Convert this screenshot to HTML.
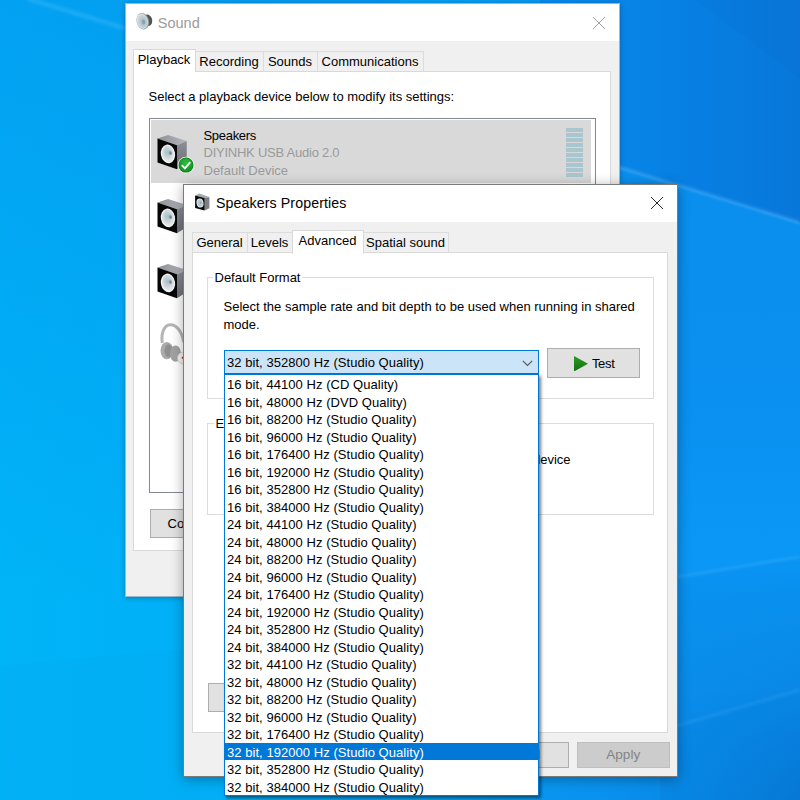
<!DOCTYPE html>
<html lang="en">
<head>
<meta charset="utf-8">
<title>Sound</title>
<style>
*{box-sizing:border-box;margin:0;padding:0}
html,body{width:800px;height:800px;overflow:hidden;background:#0a9af0}
body{position:relative;font-family:"Liberation Sans",sans-serif;font-size:13px;color:#000;-webkit-font-smoothing:antialiased}
.abs{position:absolute}
.t{position:absolute;white-space:nowrap;line-height:16px}
#wall{position:absolute;left:0;top:0;width:800px;height:800px}
/* ---------- Sound window ---------- */
#snd{position:absolute;left:124.5px;top:3px;width:495px;height:594px;background:#f0f0f0;border:1px solid #9db6c8;box-shadow:0 1px 5px rgba(0,0,0,.28)}
#snd .tb{position:absolute;left:0;top:0;width:493px;height:37px;background:#fff}
#snd .title{left:32.3px;top:9px;font-size:14.5px;line-height:20px;color:#9b9b9b}
.tab{position:absolute;top:47px;height:20px;background:#f0f0f0;border:1px solid #dcdcdc;border-bottom:none;font-size:13px;line-height:19px;text-align:center;white-space:nowrap}
.tab.sel{top:45px;height:23px;background:#fff;border-color:#d9d9d9;z-index:2;line-height:20px}
.panel{position:absolute;background:#fff;border:1px solid #d9d9d9}
.btn{position:absolute;background:#e1e1e1;border:1px solid #adadad;text-align:center;white-space:nowrap}
.btn.dis{background:#cccccc;border-color:#bfbfbf;color:#838383}
/* ---------- Properties window ---------- */
#prop{position:absolute;left:182.5px;top:184px;width:495px;height:593px;background:#f0f0f0;border:1px solid #7a7a7a;box-shadow:0 2px 12px rgba(0,0,0,.33)}
#prop .in{position:absolute;left:0;top:1px;width:493px;height:589px}
#prop .tb{position:absolute;left:0;top:0;width:493px;height:37px;background:#fff}
#prop .title{left:32.5px;top:7px;font-size:14.2px;line-height:20px;color:#000;letter-spacing:.1px}
.grp{position:absolute;border:1px solid #dcdcdc}
.grp .lg{position:absolute;left:6px;top:-8.5px;background:#fff;padding:0 2px;line-height:16px;white-space:nowrap}
/* dropdown */
#dd{position:absolute;left:224px;top:374px;width:315px;height:422px;background:#fff;border:1px solid #0078d7;box-shadow:2px 2px 3px rgba(0,0,0,.5);z-index:10}
#dd div{height:17.5px;line-height:19.5px;padding-left:2px;white-space:nowrap;font-size:13px;color:#000;letter-spacing:.05px}
#dd div.hl{background:#0078d7;color:#fff}
</style>
</head>
<body>
<svg id="wall" viewBox="0 0 800 800" preserveAspectRatio="none">
  <defs>
    <linearGradient id="gA" x1="0" y1="0" x2="1" y2="0">
      <stop offset="0" stop-color="#00b4f8"/>
      <stop offset="0.23" stop-color="#01b0f7"/>
      <stop offset="0.75" stop-color="#0992ee"/>
      <stop offset="0.875" stop-color="#0888e4"/>
      <stop offset="1" stop-color="#077ad6"/>
    </linearGradient>
    <linearGradient id="gB" x1="0" y1="0" x2="0" y2="1">
      <stop offset="0" stop-color="#0a6ee0" stop-opacity=".27"/>
      <stop offset="0.4" stop-color="#0a6ee0" stop-opacity=".13"/>
      <stop offset="0.75" stop-color="#0a6ee0" stop-opacity="0"/>
    </linearGradient>
    <linearGradient id="gC" x1="0" y1="0" x2="0" y2="1">
      <stop offset="0" stop-color="#0a8eee"/>
      <stop offset="0.5" stop-color="#0a90f0"/>
      <stop offset="0.7" stop-color="#0a98f6"/>
      <stop offset="0.86" stop-color="#0a92f0" stop-opacity=".7"/>
      <stop offset="1" stop-color="#0a8cec" stop-opacity="0"/>
    </linearGradient>
    <linearGradient id="gD" x1="0" y1="0" x2="1" y2="0">
      <stop offset="0" stop-color="#088aec"/>
      <stop offset="0.4" stop-color="#0783e6"/>
      <stop offset="1" stop-color="#0877da"/>
    </linearGradient>
    <filter id="bl" x="-20%" y="-20%" width="140%" height="140%"><feGaussianBlur stdDeviation="1.6"/></filter>
  </defs>
  <rect x="0" y="0" width="800" height="800" fill="url(#gA)"/>
  <rect x="0" y="0" width="400" height="800" fill="url(#gB)"/>
  <rect x="560" y="0" width="240" height="800" fill="url(#gC)"/>
  <path d="M540 0 L800 0 L800 222.5 L620 167.5 L540 143 Z" fill="url(#gD)"/>
  <path d="M696 0 L800 0 L800 78 Z" fill="#0560c0" fill-opacity=".10"/>
  <path d="M540 143 L620 167.5 L800 222.5" stroke="#7cc8ff" stroke-opacity=".5" stroke-width="2" fill="none" filter="url(#bl)"/>
  <path d="M660 580 L800 558 L800 800 L660 800 Z" fill="#0678d8" fill-opacity=".10"/>
  <path d="M660 732 L800 690 L800 800 L660 800 Z" fill="#0670d0" fill-opacity=".07"/>
  <path d="M660 580 L800 557" stroke="#6cc4ff" stroke-opacity=".3" stroke-width="2" fill="none" filter="url(#bl)"/>
  <path d="M660 731 L800 690" stroke="#6cc4ff" stroke-opacity=".22" stroke-width="2" fill="none" filter="url(#bl)"/>
  <path d="M28 -1 L126 28.5" stroke="#5ccaff" stroke-opacity=".28" stroke-width="4" fill="none" filter="url(#bl)"/>
  <polygon points="0,666 200,648 200,800 0,800" fill="#0aa0f0" fill-opacity=".10"/>
</svg>

<!-- ================= Sound window ================= -->
<div id="snd">
  <div class="tb"></div>
  <svg class="abs" style="left:8px;top:7px" width="20" height="20" viewBox="0 0 20 20">
    <defs><radialGradient id="sc" cx=".55" cy=".55" r=".6"><stop offset="0" stop-color="#9fb6c0"/><stop offset=".6" stop-color="#c3d0d5"/><stop offset="1" stop-color="#e6ecee"/></radialGradient></defs>
    <ellipse cx="13.6" cy="9.3" rx="4.6" ry="5.8" fill="#555" transform="rotate(-15 13.6 9.3)"/>
    <ellipse cx="8.8" cy="10.2" rx="6.2" ry="8.4" fill="#8f9a9e" transform="rotate(-14 8.8 10.2)"/>
    <ellipse cx="8.4" cy="10.2" rx="5.6" ry="7.8" fill="url(#sc)" transform="rotate(-14 8.4 10.2)"/>
    <ellipse cx="9.6" cy="11" rx="1.6" ry="2.4" fill="#8aa3ad" transform="rotate(-14 9.6 11)"/>
  </svg>
  <div class="t title">Sound</div>
  <svg class="abs" style="left:466px;top:12px" width="14" height="14" viewBox="0 0 14 14"><path d="M1 1 L13 13 M13 1 L1 13" stroke="#a0a0a0" stroke-width="1" fill="none"/></svg>

  <div class="tab sel" style="left:7px;width:63px">Playback</div>
  <div class="tab" style="left:69px;width:69px">Recording</div>
  <div class="tab" style="left:137px;width:55px">Sounds</div>
  <div class="tab" style="left:191px;width:107px">Communications</div>
  <div class="panel" style="left:7px;top:67px;width:478px;height:480px"></div>
  <div class="t" style="left:23px;top:85px">Select a playback device below to modify its settings:</div>

  <div class="abs" style="left:23px;top:114px;width:447px;height:375px;background:#fff;border:1px solid #828790"></div>
  <div class="abs" style="left:25px;top:115.5px;width:440px;height:63.5px;background:#d9d9d9"></div>
  <div class="t" style="left:78px;top:123.5px;letter-spacing:-.3px">Speakers</div>
  <div class="t" style="left:78px;top:141px;color:#9a9a9a;letter-spacing:-.24px">DIYINHK USB Audio 2.0</div>
  <div class="t" style="left:78px;top:158.5px;color:#9a9a9a">Default Device</div>
  <!-- level meter -->
  <svg class="abs" style="left:440px;top:123.5px" width="17" height="49" viewBox="0 0 18 49" preserveAspectRatio="none">
    <g fill="#a9c6cf">
      <rect x="0" y="0" width="18" height="4"/><rect x="0" y="5" width="18" height="4"/><rect x="0" y="10" width="18" height="4"/><rect x="0" y="15" width="18" height="4"/><rect x="0" y="20" width="18" height="4"/><rect x="0" y="25" width="18" height="4"/><rect x="0" y="30" width="18" height="4"/><rect x="0" y="35" width="18" height="4"/><rect x="0" y="40" width="18" height="4"/><rect x="0" y="45" width="18" height="4"/>
    </g>
  </svg>
  <!-- device icons -->
  <svg width="0" height="0" style="position:absolute">
    <defs>
      <linearGradient id="spT" x1="0" y1="0" x2="1" y2="0"><stop offset="0" stop-color="#8d9096"/><stop offset="1" stop-color="#b4b7bc"/></linearGradient>
      <linearGradient id="spR" x1="0" y1="0" x2="0" y2="1"><stop offset="0" stop-color="#8b8e95"/><stop offset="1" stop-color="#6c6f76"/></linearGradient>
      <radialGradient id="spC" cx=".45" cy=".4" r=".6"><stop offset="0" stop-color="#aebdc4"/><stop offset=".55" stop-color="#cdd6da"/><stop offset="1" stop-color="#e9eef0"/></radialGradient>
      <radialGradient id="okG" cx=".5" cy=".35" r=".7"><stop offset="0" stop-color="#2fc040"/><stop offset="1" stop-color="#0e8c1e"/></radialGradient>
      
    </defs>
  </svg>
  <svg class="abs" style="left:29px;top:128px" width="40" height="44" viewBox="0 0 40 44">
    <path d="M2.5 6.5 L13 3.1 L31.75 9.1 L22 13.25 Z" fill="url(#spT)"/>
        <path d="M22 13.25 L31.75 9.1 L31.75 31 L22 37.25 Z" fill="url(#spR)"/>
        <path d="M2.5 6.5 L22 13.25 L22 37.25 L2.5 30.5 Z" fill="#060606"/>
        <g transform="rotate(-10 13 21.9)">
          <ellipse cx="13" cy="21.9" rx="7.1" ry="9.4" fill="#f4f6f7"/>
          <ellipse cx="13.2" cy="21.9" rx="6" ry="8.2" fill="url(#spC)"/>
          <ellipse cx="15" cy="21" rx="2" ry="2.5" fill="#9fc0d2"/>
          <ellipse cx="15.6" cy="21.6" rx="1.2" ry="1.7" fill="#6f8894"/>
        </g>
    <circle cx="31" cy="33.1" r="8.3" fill="#f4f4f4"/><circle cx="31" cy="33.1" r="7.5" fill="#0b7d1b"/><circle cx="31" cy="33.1" r="6.8" fill="url(#okG)"/>
    <path d="M26.8 33.2 L29.9 36.3 L35.3 30.2" stroke="#fff" stroke-width="1.9" fill="none"/>
  </svg>
  <svg class="abs" style="left:29px;top:192px" width="40" height="44" viewBox="0 0 40 44"><path d="M2.5 6.5 L13 3.1 L31.75 9.1 L22 13.25 Z" fill="url(#spT)"/>
        <path d="M22 13.25 L31.75 9.1 L31.75 31 L22 37.25 Z" fill="url(#spR)"/>
        <path d="M2.5 6.5 L22 13.25 L22 37.25 L2.5 30.5 Z" fill="#060606"/>
        <g transform="rotate(-10 13 21.9)">
          <ellipse cx="13" cy="21.9" rx="7.1" ry="9.4" fill="#f4f6f7"/>
          <ellipse cx="13.2" cy="21.9" rx="6" ry="8.2" fill="url(#spC)"/>
          <ellipse cx="15" cy="21" rx="2" ry="2.5" fill="#9fc0d2"/>
          <ellipse cx="15.6" cy="21.6" rx="1.2" ry="1.7" fill="#6f8894"/>
        </g></svg>
  <svg class="abs" style="left:29px;top:257px" width="40" height="44" viewBox="0 0 40 44"><path d="M2.5 6.5 L13 3.1 L31.75 9.1 L22 13.25 Z" fill="url(#spT)"/>
        <path d="M22 13.25 L31.75 9.1 L31.75 31 L22 37.25 Z" fill="url(#spR)"/>
        <path d="M2.5 6.5 L22 13.25 L22 37.25 L2.5 30.5 Z" fill="#060606"/>
        <g transform="rotate(-10 13 21.9)">
          <ellipse cx="13" cy="21.9" rx="7.1" ry="9.4" fill="#f4f6f7"/>
          <ellipse cx="13.2" cy="21.9" rx="6" ry="8.2" fill="url(#spC)"/>
          <ellipse cx="15" cy="21" rx="2" ry="2.5" fill="#9fc0d2"/>
          <ellipse cx="15.6" cy="21.6" rx="1.2" ry="1.7" fill="#6f8894"/>
        </g></svg>
  <svg class="abs" style="left:30px;top:318px" width="34" height="46" viewBox="0 0 34 46">
    <path d="M6.3 21 C4.5 8 10 2.8 14.5 2.8 C20 2.8 26 9 27.6 20" stroke="#b5b5b5" stroke-width="3" fill="none"/>
    <ellipse cx="10.9" cy="28.6" rx="6.4" ry="8.6" fill="#aaaaaa"/><ellipse cx="12.5" cy="28.8" rx="4" ry="6.4" fill="#8f8f8f"/>
    <ellipse cx="19.5" cy="31.6" rx="5.5" ry="8.2" fill="#a2a2a2"/>
    <circle cx="27.5" cy="36" r="6" fill="#f4f4f4" stroke="#c8c8c8" stroke-width=".8"/><circle cx="26.6" cy="35.8" r="1" fill="#e02020"/>
  </svg>

  <div class="btn" style="left:24px;top:504.5px;width:90px;height:29px;line-height:28px;text-align:left;padding-left:17px">Configure</div>
</div>

<!-- ================= Speakers Properties window ================= -->
<div id="prop">
  <div class="tb"></div>
  <div class="in">
  <svg class="abs" style="left:9px;top:6px" width="18" height="20" viewBox="0 0 18 20">
    <path d="M2.1 3.5 L6.25 1.6 L16.4 5 L11.65 6.1 Z" fill="#a5a8ad"/>
    <path d="M11.65 6.1 L16.4 5 L16.4 16.25 L11.65 18.5 Z" fill="#7c7f86"/>
    <path d="M2.1 3.5 L11.65 6.1 L11.65 18.5 L2.1 15.9 Z" fill="#080808"/>
    <ellipse cx="7" cy="11" rx="3.5" ry="4.5" fill="#eef2f3" transform="rotate(-10 7 11)"/>
    <ellipse cx="7.1" cy="11" rx="2.7" ry="3.7" fill="#b9c9d0" transform="rotate(-10 7 11)"/>
    <ellipse cx="7.8" cy="10.8" rx="1" ry="1.4" fill="#8fb0c0"/>
  </svg>
  <div class="t title">Speakers Properties</div>
  <svg class="abs" style="left:466px;top:10px" width="14" height="14" viewBox="0 0 14 14"><path d="M1 1 L13 13 M13 1 L1 13" stroke="#2b2b2b" stroke-width="1" fill="none"/></svg>

  <div class="tab" style="left:8px;top:46px;width:56px;height:21px">General</div>
  <div class="tab" style="left:63px;top:46px;width:46px;height:21px">Levels</div>
  <div class="tab sel" style="left:108px;top:44px;width:72px;height:24px">Advanced</div>
  <div class="tab" style="left:179px;top:46px;width:86px;height:21px">Spatial sound</div>
  <div class="panel" style="left:8px;top:66px;width:476px;height:481px"></div>

  <div class="grp" style="left:23px;top:91px;width:447px;height:122px"><div class="lg" style="left:5px">Default Format</div></div>
  <div class="t" style="left:40px;top:113px">Select the sample rate and bit depth to be used when running in shared</div>
  <div class="t" style="left:40px;top:131px">mode.</div>
  <!-- combobox -->
  <div class="abs" style="left:40.5px;top:164px;width:315px;height:24px;background:#cce4f7;border:1px solid #0078d7"></div>
  <div class="t" style="left:43.5px;top:169px;letter-spacing:.05px">32 bit, 352800 Hz (Studio Quality)</div>
  <svg class="abs" style="left:338.5px;top:173.5px" width="11" height="7" viewBox="0 0 11 7"><path d="M0.8 0.8 L5.5 5.5 L10.2 0.8" stroke="#555" stroke-width="1.1" fill="none"/></svg>
  <div class="btn" style="left:363.5px;top:162px;width:92.5px;height:29.5px;line-height:29px;padding-left:20px;letter-spacing:-.3px">Test</div>
  <svg class="abs" style="left:390px;top:169.5px" width="14" height="15.5" viewBox="0 0 14 15.5"><defs><linearGradient id="trg" x1="0" y1="0" x2="0" y2="1"><stop offset="0" stop-color="#2a9c20"/><stop offset="1" stop-color="#156f10"/></linearGradient></defs><path d="M0 0 L14 7.75 L0 15.5 Z" fill="url(#trg)"/></svg>

  <div class="grp" style="left:23px;top:237px;width:447px;height:92px"><div class="lg">Exclusive Mode</div></div>
  <div class="abs" style="left:40px;top:267px;width:13px;height:13px;background:#fff;border:1px solid #333"></div>
  <div class="t" style="right:105.9px;top:266px">Allow applications to take exclusive control of this device</div>
  <div class="abs" style="left:40px;top:290px;width:13px;height:13px;background:#fff;border:1px solid #333"></div>
  <div class="t" style="left:58px;top:289px">Give exclusive mode applications priority</div>

  <div class="btn" style="left:24px;top:497px;width:131px;height:29px;line-height:27px">Restore Defaults</div>
  <div class="btn" style="left:294.5px;top:556px;width:90.5px;height:25.5px;line-height:23px;text-align:left;padding-left:20.5px">Cancel</div>
  <div class="btn dis" style="left:393.5px;top:556px;width:92.5px;height:25.5px;line-height:24px;font-size:13.5px">Apply</div>
  </div>
</div>

<!-- ================= dropdown list ================= -->
<div id="dd">
<div>16 bit, 44100 Hz (CD Quality)</div>
<div>16 bit, 48000 Hz (DVD Quality)</div>
<div>16 bit, 88200 Hz (Studio Quality)</div>
<div>16 bit, 96000 Hz (Studio Quality)</div>
<div>16 bit, 176400 Hz (Studio Quality)</div>
<div>16 bit, 192000 Hz (Studio Quality)</div>
<div>16 bit, 352800 Hz (Studio Quality)</div>
<div>16 bit, 384000 Hz (Studio Quality)</div>
<div>24 bit, 44100 Hz (Studio Quality)</div>
<div>24 bit, 48000 Hz (Studio Quality)</div>
<div>24 bit, 88200 Hz (Studio Quality)</div>
<div>24 bit, 96000 Hz (Studio Quality)</div>
<div>24 bit, 176400 Hz (Studio Quality)</div>
<div>24 bit, 192000 Hz (Studio Quality)</div>
<div>24 bit, 352800 Hz (Studio Quality)</div>
<div>24 bit, 384000 Hz (Studio Quality)</div>
<div>32 bit, 44100 Hz (Studio Quality)</div>
<div>32 bit, 48000 Hz (Studio Quality)</div>
<div>32 bit, 88200 Hz (Studio Quality)</div>
<div>32 bit, 96000 Hz (Studio Quality)</div>
<div>32 bit, 176400 Hz (Studio Quality)</div>
<div class="hl">32 bit, 192000 Hz (Studio Quality)</div>
<div>32 bit, 352800 Hz (Studio Quality)</div>
<div>32 bit, 384000 Hz (Studio Quality)</div>
</div>
</body>
</html>
